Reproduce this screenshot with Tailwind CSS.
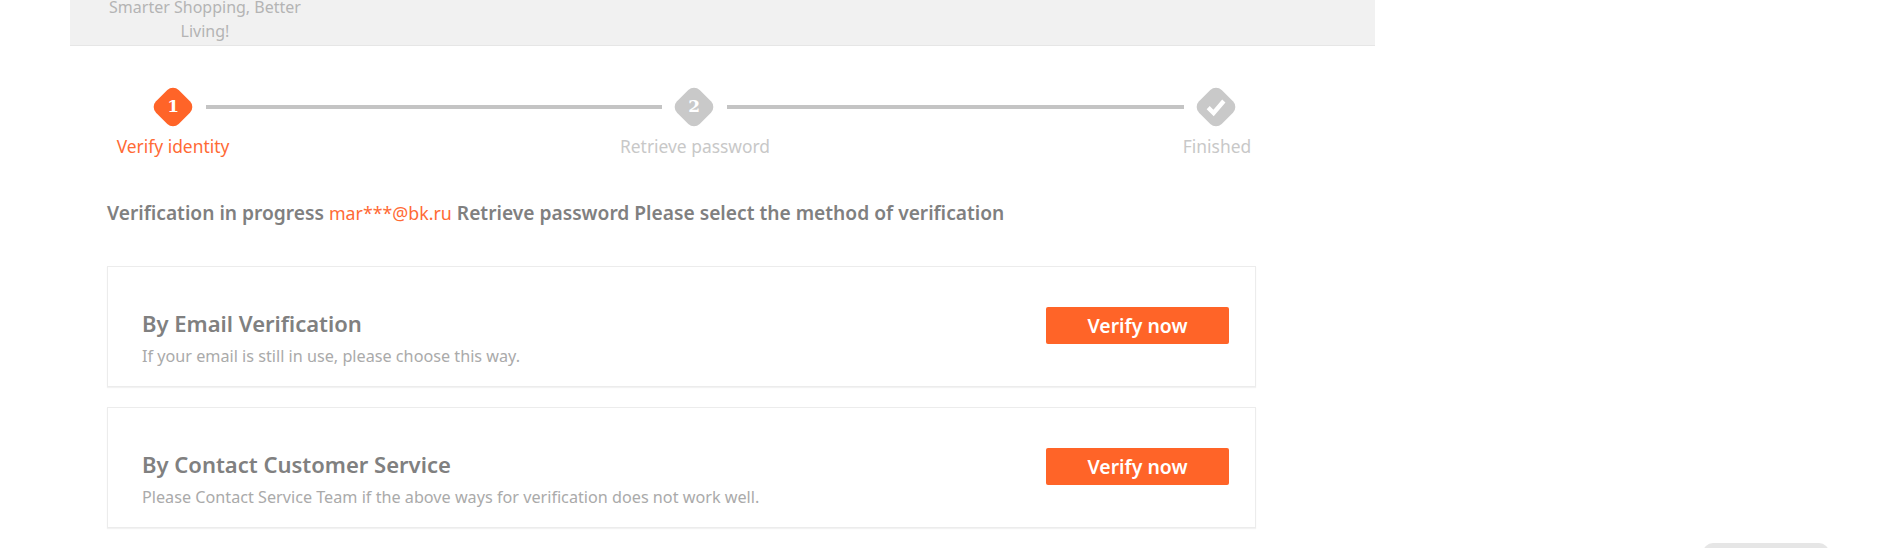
<!DOCTYPE html>
<html lang="en">
<head>
    <meta charset="UTF-8">
    <title>Retrieve password</title>
    <script src="https://cdn.jsdelivr.net/npm/@tailwindcss/browser@4"></script>
</head>
<body class="bg-white font-['Noto_Sans',sans-serif]">
    <div class="relative h-[548px] overflow-hidden">
        <div class="ml-[70px] w-[1305px]">
            <!-- Header strip -->
            <div class="h-[46px] bg-[#f1f1f1] border-b border-[#e6e6e6]">
                <div class="relative -top-[5px] ml-[30px] w-[210px] text-center text-[16px] leading-[24px] text-[#b4b4b4]">Smarter Shopping, Better Living!</div>
            </div>

            <!-- Steps -->
            <div class="mt-[42px] ml-[83px] flex items-center h-[38px]">
                <div class="w-[39px] h-[38px] flex items-center justify-center shrink-0">
                    <div class="w-[32px] h-[32px] shrink-0 rotate-45 rounded-[8px] bg-[#ff6428] flex items-center justify-center">
                        <span class="-rotate-45 text-white text-[17px] font-bold font-['DejaVu_Serif',serif]">1</span>
                    </div>
                </div>
                <div class="ml-[14px] w-[456px] h-[4px] bg-[#c4c4c4]"></div>
                <div class="ml-[12px] w-[39px] h-[38px] flex items-center justify-center shrink-0">
                    <div class="w-[32px] h-[32px] shrink-0 rotate-45 rounded-[8px] bg-[#c9c9c9] flex items-center justify-center">
                        <span class="-rotate-45 text-white text-[17px] font-bold font-['DejaVu_Serif',serif]">2</span>
                    </div>
                </div>
                <div class="ml-[14px] w-[457px] h-[4px] bg-[#c4c4c4]"></div>
                <div class="ml-[12px] w-[39px] h-[38px] flex items-center justify-center shrink-0">
                    <div class="w-[32px] h-[32px] shrink-0 rotate-45 rounded-[8px] bg-[#c9c9c9] flex items-center justify-center">
                        <svg class="-rotate-45 w-[24px] h-[24px]" viewBox="0 0 20 20" fill="none" stroke="#fff" stroke-width="3.6"><path d="M3.5 10.5l4.5 4.5l8.5-10"/></svg>
                    </div>
                </div>
            </div>
            <div class="mt-[8px] ml-[23px] flex gap-[362px] text-[17.4px] leading-[24px] text-center whitespace-nowrap text-[#c8c8c8]">
                <div class="w-[160px] text-[#ff6a35]">Verify identity</div>
                <div class="w-[160px]">Retrieve password</div>
                <div class="w-[160px]">Finished</div>
            </div>

            <!-- Method list -->
            <div class="ml-[37px] w-[1149px]">
                <p class="mt-[42px] text-[19.2px] leading-[26px] font-semibold text-[#808080]">Verification in progress <span class="text-[17.8px] font-normal text-[#ff6a35]">mar***@bk.ru</span> Retrieve password Please select the method of verification</p>

                <div class="mt-[40px] h-[121px] border border-[#ececec] shadow-[0_1px_1px_rgba(0,0,0,0.05)] flex items-center justify-between pl-[34px] pr-[26px]">
                    <div class="pt-[22px]">
                        <h2 class="text-[22px] leading-[28px] font-semibold text-[#808080]">By Email Verification</h2>
                        <p class="mt-[9px] text-[16.2px] leading-[20px] text-[#aaaaaa]">If your email is still in use, please choose this way.</p>
                    </div>
                    <button class="mb-[2px] w-[183px] h-[37px] rounded-[2px] bg-[#ff6428] text-white text-[19.4px] font-semibold">Verify now</button>
                </div>

                <div class="mt-[20px] h-[121px] border border-[#ececec] shadow-[0_1px_1px_rgba(0,0,0,0.05)] flex items-center justify-between pl-[34px] pr-[26px]">
                    <div class="pt-[22px]">
                        <h2 class="text-[22px] leading-[28px] font-semibold text-[#808080]">By Contact Customer Service</h2>
                        <p class="mt-[9px] text-[16.2px] leading-[20px] text-[#aaaaaa]">Please Contact Service Team if the above ways for verification does not work well.</p>
                    </div>
                    <button class="mb-[2px] w-[183px] h-[37px] rounded-[2px] bg-[#ff6428] text-white text-[19.4px] font-semibold">Verify now</button>
                </div>
            </div>
        </div>

        <!-- Cut-off floating button in the corner -->
        <div class="absolute left-[1703px] top-[543px] w-[126px] h-[40px] rounded-[10px] bg-[#e6e6e6]"></div>
    </div>
</body>
</html>
